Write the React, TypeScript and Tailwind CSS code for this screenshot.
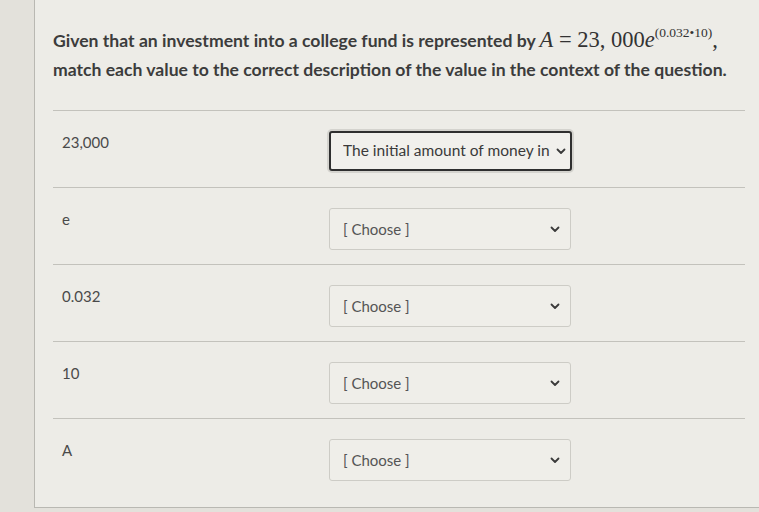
import React from "react";

// ---------------------------------------------------------------------------
// Matching question: each value gets a dropdown with its description
// ---------------------------------------------------------------------------
interface MatchRow {
  value: string;
  answer: string | null;
}

const ROWS: MatchRow[] = [
  { value: "23,000", answer: "The initial amount of money in" },
  { value: "e", answer: null },
  { value: "0.032", answer: null },
  { value: "10", answer: null },
  { value: "A", answer: null },
];

function Chevron() {
  return (
    <svg width="10" height="8" viewBox="0 0 10 8" className="shrink-0">
      <path d="M1.5 2.5 L5 6 L8.5 2.5" fill="none" stroke="#3a3a3a" strokeWidth="1.8" strokeLinecap="round" strokeLinejoin="round" />
    </svg>
  );
}

function FakeSelect({ answer }: { answer: string | null }) {
  const focused = answer !== null;
  return (
    <div
      className={
        focused
          ? "flex items-center justify-between w-[243px] h-[40px] pl-[12px] pr-[4px] rounded-[3px] border-2 border-[#2f2f2f] bg-[#f1f0ec] shadow-[0_0_0_2px_#d4d3ce]"
          : "flex items-center justify-between w-[242px] h-[42px] pl-[13px] pr-[10px] rounded-[3px] border border-[#cdccc6] bg-[#efeee9]"
      }
    >
      <span
        className={
          focused
            ? "text-[15.5px] text-[#3a3a3a] whitespace-nowrap overflow-hidden"
            : "text-[15px] text-[#555] whitespace-nowrap"
        }
      >
        {answer ?? "[ Choose ]"}
      </span>
      <Chevron />
    </div>
  );
}

export default function App() {
  return (
    <div className="flex w-[759px] h-[512px] bg-[#e3e1db] font-['Lato','Liberation_Sans',sans-serif] overflow-hidden">
      {/* left margin outside the question panel */}
      <div className="w-[34px] shrink-0" />

      <div className="flex flex-col flex-1 h-[508px] border-l border-b border-[#b9b8b2] bg-[#edece7] pl-[18px] pr-[14px]">
        {/* question text */}
        <div className="pt-[25px] pb-[26px] text-[17.6px] leading-[29px] font-bold text-[#3c3c3c] whitespace-nowrap">
          <p>
            Given that an investment into a college fund is represented by{" "}
            <span className="font-['Liberation_Serif',serif] font-normal text-[22.5px] text-[#333]">
              <i>A</i> = 23, 000<i>e</i>
              <sup className="text-[13.5px] top-[-0.75em]">(0.032•10)</sup>,
            </span>
          </p>
          <p>match each value to the correct description of the value in the context of the question.</p>
        </div>

        {/* rows */}
        {ROWS.map((row) => (
          <div key={row.value} className="flex h-[77px] border-t border-[#c3c2bc]">
            <div className="w-[276px] shrink-0 pl-[9px] pt-[21px] text-[15px] leading-[20px] text-[#4a4a4a]">
              {row.value}
            </div>
            <div className="pt-[20px]">
              <FakeSelect answer={row.answer} />
            </div>
          </div>
        ))}
      </div>
    </div>
  );
}
